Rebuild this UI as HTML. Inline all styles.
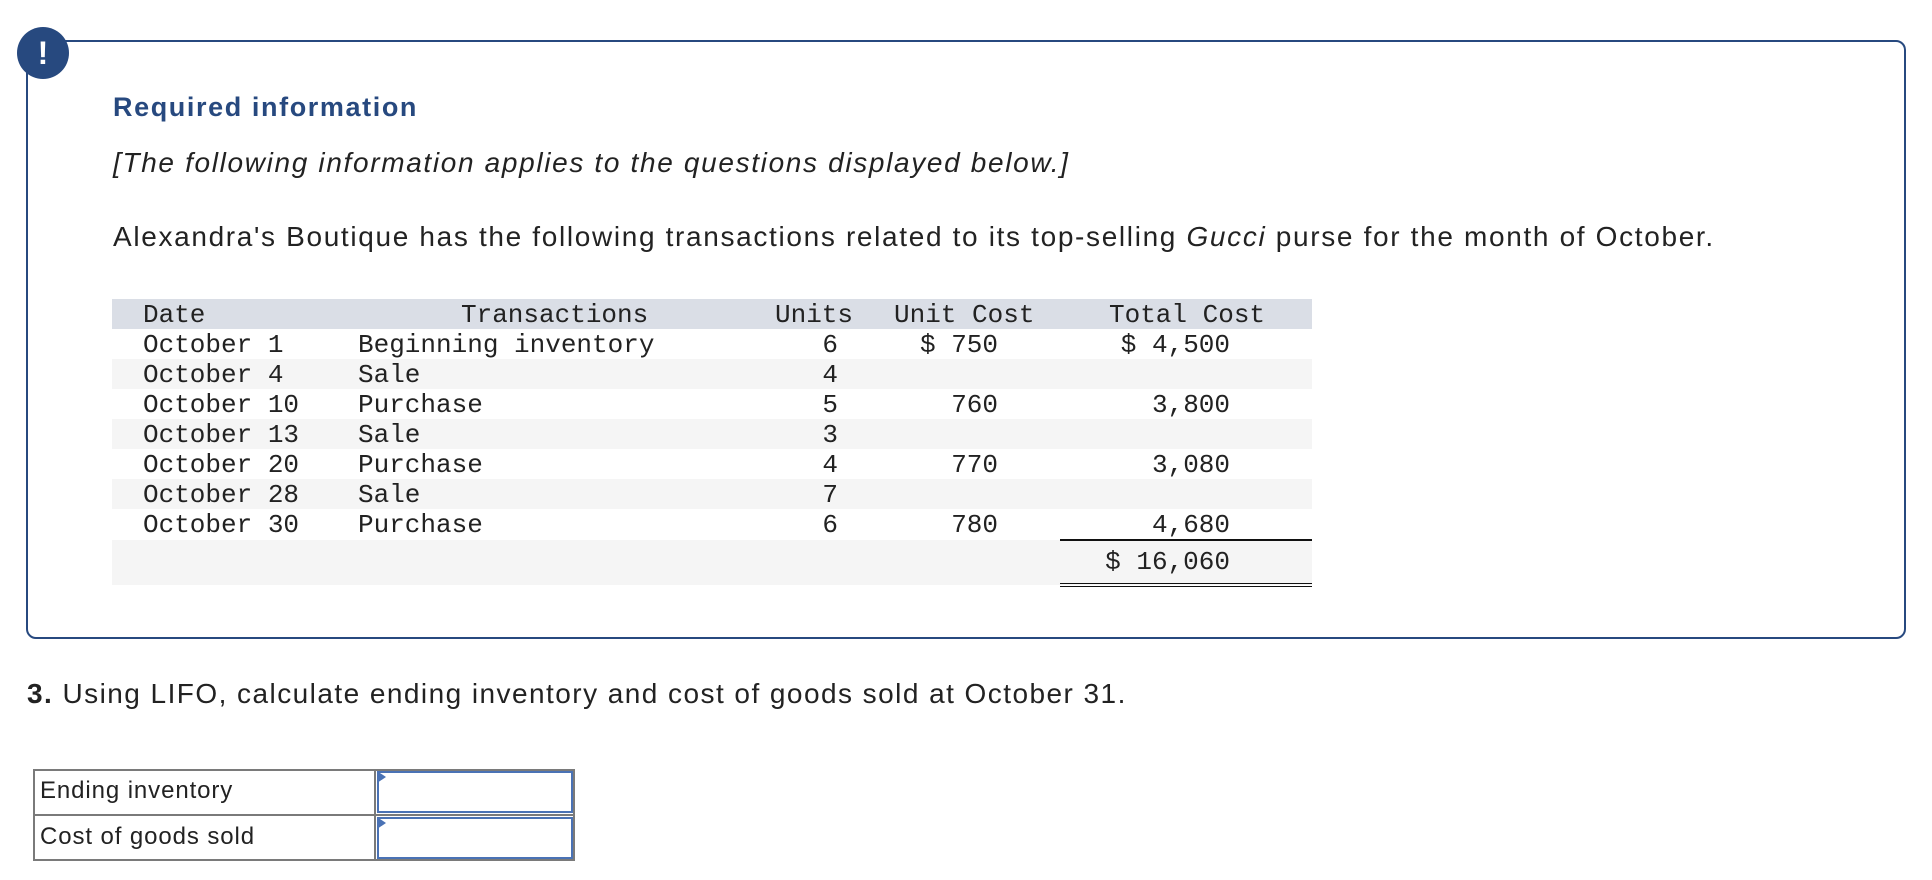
<!DOCTYPE html>
<html><head><meta charset="utf-8"><style>
*{margin:0;padding:0;box-sizing:border-box}
body{width:1932px;height:880px;background:#fff;position:relative;overflow:hidden;font-family:"Liberation Sans",Arial,sans-serif;color:#222}
.abs{position:absolute;white-space:nowrap}
.box{position:absolute;left:26px;top:40px;width:1880px;height:599px;border:2px solid #27497f;border-radius:10px}
.circ{position:absolute;left:17px;top:27px;width:52px;height:52px;border-radius:50%;background:#27497f;color:#fff;font-weight:bold;font-size:32px;text-align:center;line-height:52px}
.mono{font-family:"Liberation Mono","DejaVu Sans Mono",monospace;font-size:26px;color:#222}
.row{position:absolute;left:112px;width:1200px;height:30px}
.r{position:absolute;text-align:right;white-space:nowrap}
.l{position:absolute;white-space:nowrap}
</style></head><body>
<div class="box"></div>
<div class="circ">!</div>
<div class="abs" style="left:113px;top:92px;font-size:27px;font-weight:bold;color:#27497f;letter-spacing:1.6px">Required information</div>
<div class="abs" style="left:113px;top:147px;font-size:28px;font-style:italic;letter-spacing:1.66px">[The following information applies to the questions displayed below.]</div>
<div class="abs" style="left:113px;top:221px;font-size:28px;letter-spacing:1.66px">Alexandra's Boutique has the following transactions related to its top-selling <i>Gucci</i> purse for the month of October.</div>

<div class="row" style="top:299px;background:#dadee6"></div>
<div class="row" style="top:359px;background:#f5f5f5"></div>
<div class="row" style="top:419px;background:#f5f5f5"></div>
<div class="row" style="top:479px;background:#f5f5f5"></div>
<div class="row" style="top:540px;height:45px;background:#f5f5f5"></div>
<div class="abs" style="left:1060px;top:539px;width:252px;height:2px;background:#111"></div>
<div class="abs" style="left:1060px;top:583px;width:252px;height:4px;border-top:1.5px solid #111;border-bottom:1.5px solid #111"></div>

<div class="mono">
<div class="l" style="left:143px;top:300px">Date</div>
<div class="l" style="left:461px;top:300px">Transactions</div>
<div class="l" style="left:775px;top:300px">Units</div>
<div class="l" style="left:894px;top:300px">Unit Cost</div>
<div class="l" style="left:1109px;top:300px">Total Cost</div>

<div class="l" style="left:143px;top:330px">October 1</div>
<div class="l" style="left:143px;top:360px">October 4</div>
<div class="l" style="left:143px;top:390px">October 10</div>
<div class="l" style="left:143px;top:420px">October 13</div>
<div class="l" style="left:143px;top:450px">October 20</div>
<div class="l" style="left:143px;top:480px">October 28</div>
<div class="l" style="left:143px;top:510px">October 30</div>

<div class="l" style="left:358px;top:330px">Beginning inventory</div>
<div class="l" style="left:358px;top:360px">Sale</div>
<div class="l" style="left:358px;top:390px">Purchase</div>
<div class="l" style="left:358px;top:420px">Sale</div>
<div class="l" style="left:358px;top:450px">Purchase</div>
<div class="l" style="left:358px;top:480px">Sale</div>
<div class="l" style="left:358px;top:510px">Purchase</div>

<div class="r" style="right:1094px;top:330px">6</div>
<div class="r" style="right:1094px;top:360px">4</div>
<div class="r" style="right:1094px;top:390px">5</div>
<div class="r" style="right:1094px;top:420px">3</div>
<div class="r" style="right:1094px;top:450px">4</div>
<div class="r" style="right:1094px;top:480px">7</div>
<div class="r" style="right:1094px;top:510px">6</div>

<div class="r" style="right:934px;top:330px">$ 750</div>
<div class="r" style="right:934px;top:390px">760</div>
<div class="r" style="right:934px;top:450px">770</div>
<div class="r" style="right:934px;top:510px">780</div>

<div class="r" style="right:702px;top:330px">$ 4,500</div>
<div class="r" style="right:702px;top:390px">3,800</div>
<div class="r" style="right:702px;top:450px">3,080</div>
<div class="r" style="right:702px;top:510px">4,680</div>
<div class="r" style="right:702px;top:547px">$ 16,060</div>
</div>

<div class="abs" style="left:27px;top:678px;font-size:28px;letter-spacing:1.45px"><b>3.</b> Using LIFO, calculate ending inventory and cost of goods sold at October 31.</div>

<div class="abs" style="left:33px;top:769px;width:542px;height:92px;border:2px solid #7a7a7a"></div>
<div class="abs" style="left:33px;top:814px;width:542px;height:2px;background:#7a7a7a"></div>
<div class="abs" style="left:374px;top:769px;width:2px;height:92px;background:#7a7a7a"></div>
<div class="abs" style="left:377px;top:771px;width:196px;height:42px;border:2px solid #4a72b5"></div>
<div class="abs" style="left:377px;top:817px;width:196px;height:42px;border:2px solid #4a72b5"></div>
<div class="abs" style="left:377px;top:771px;width:0;height:0;border-left:9px solid #4a72b5;border-top:6px solid transparent;border-bottom:6px solid transparent"></div>
<div class="abs" style="left:377px;top:817px;width:0;height:0;border-left:9px solid #4a72b5;border-top:6px solid transparent;border-bottom:6px solid transparent"></div>
<div class="abs" style="left:40px;top:777px;font-size:24px;letter-spacing:0.9px">Ending inventory</div>
<div class="abs" style="left:40px;top:823px;font-size:24px;letter-spacing:0.9px">Cost of goods sold</div>
</body></html>
